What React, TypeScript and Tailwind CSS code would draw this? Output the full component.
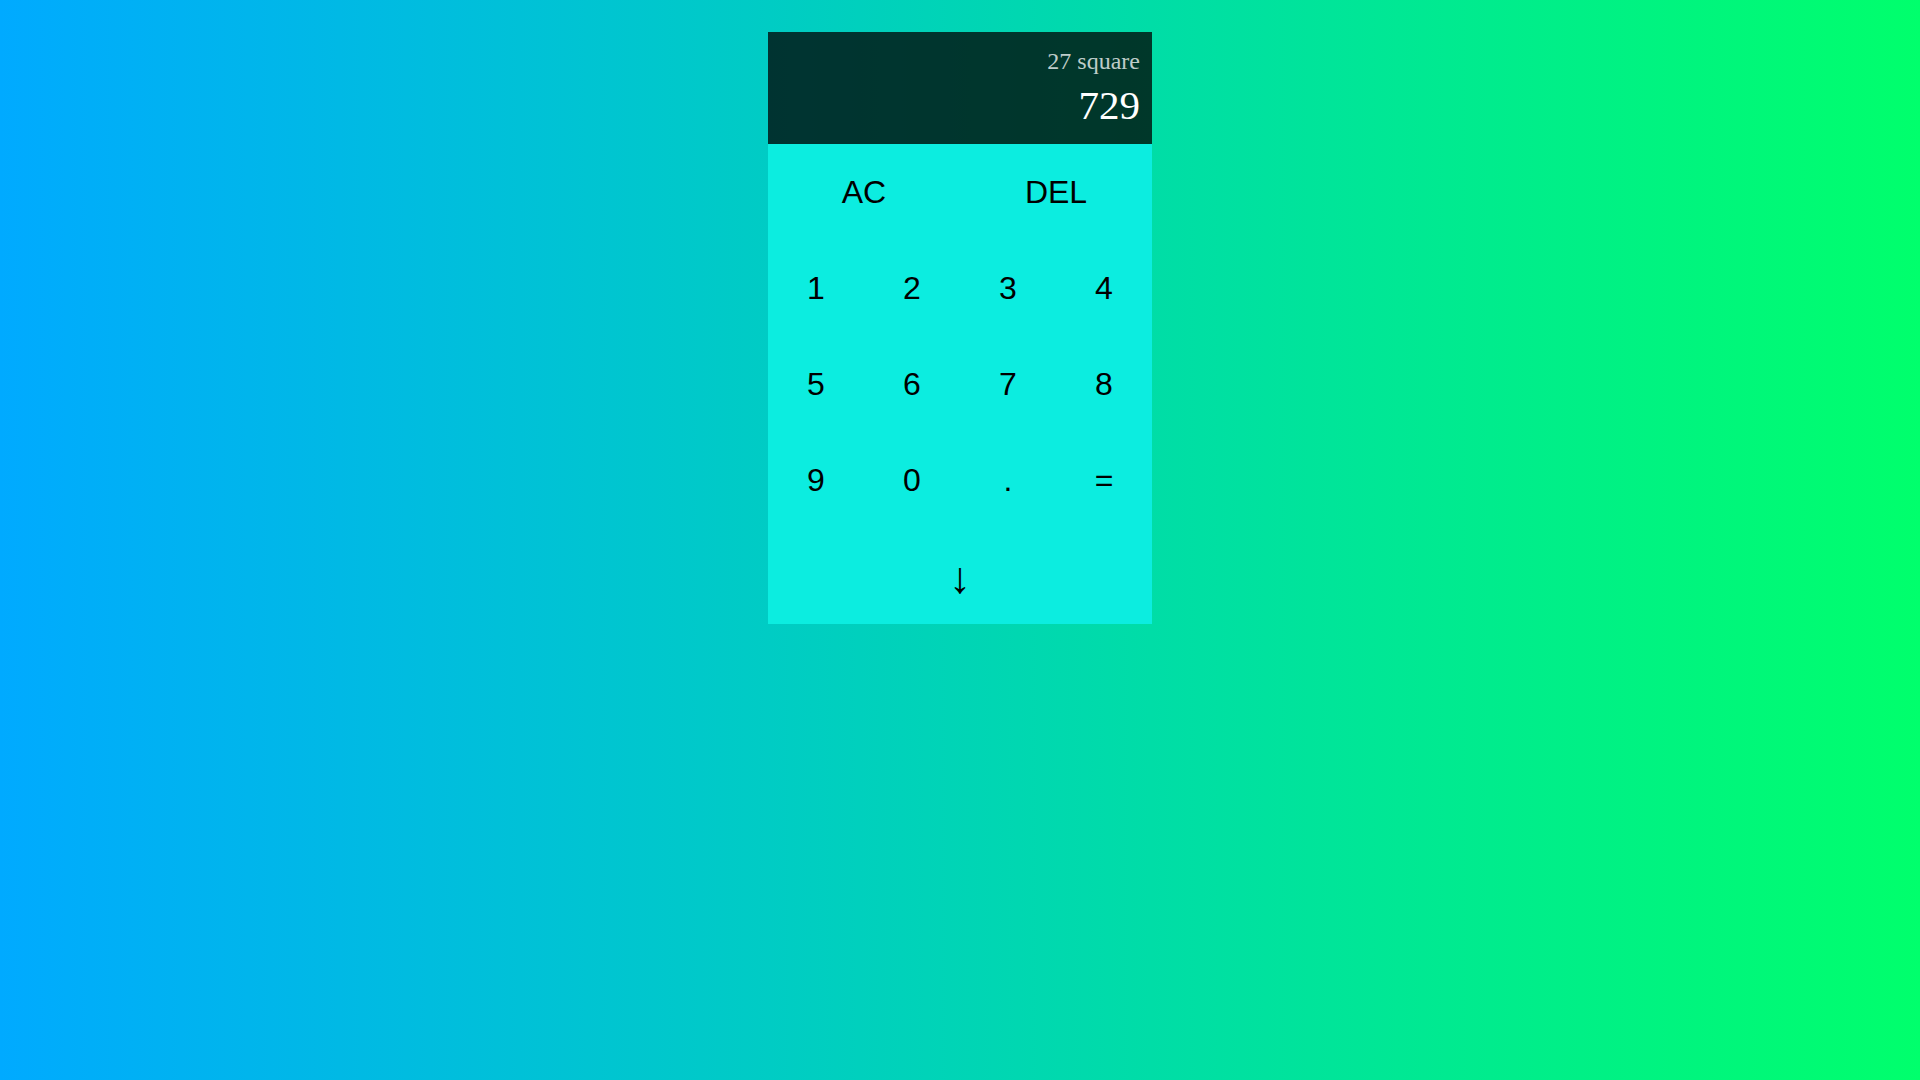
const keys = ["1", "2", "3", "4", "5", "6", "7", "8", "9", "0", ".", "="];

const App = () => {
  return (
    <div className="min-h-screen w-full bg-[linear-gradient(to_right,#00aaff,#00ff6c)] pt-8">
      <div className="mx-auto grid w-[384px] grid-cols-[repeat(4,96px)] grid-rows-[112px_repeat(5,96px)]">
        <div className="col-span-4 flex flex-col items-end gap-3 bg-black/75 px-3 pt-[17px] font-['Liberation_Serif',serif]">
          <div className="text-[24px] leading-none text-white/75">27 square</div>
          <div className="text-[41px] leading-none text-white">729</div>
        </div>
        <button className="col-span-2 bg-[#0cede0] font-['Liberation_Sans',Arial,sans-serif] text-[32px] text-black">
          AC
        </button>
        <button className="col-span-2 bg-[#0cede0] font-['Liberation_Sans',Arial,sans-serif] text-[32px] text-black">
          DEL
        </button>
        {keys.map((k) => (
          <button
            key={k}
            className="bg-[#0cede0] font-['Liberation_Sans',Arial,sans-serif] text-[32px] text-black"
          >
            {k}
          </button>
        ))}
        <button className="col-span-4 bg-[#0cede0] pt-1 font-['Liberation_Sans',Arial,sans-serif] text-[44px] leading-none text-black">
          ↓
        </button>
      </div>
    </div>
  );
};

export default App;
